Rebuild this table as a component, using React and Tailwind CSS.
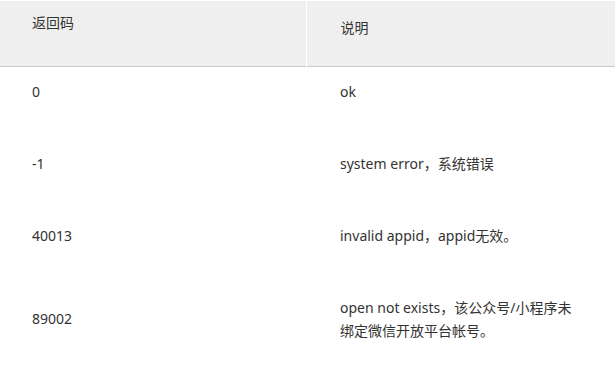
import React from "react";

const rows = [
  { code: "0", desc: "ok" },
  { code: "-1", desc: "system error，系统错误" },
  { code: "40013", desc: "invalid appid，appid无效。" },
  {
    code: "89002",
    desc: (
      <>
        open not exists，该公众号/小程序未
        <br />
        绑定微信开放平台帐号。
      </>
    ),
  },
];

const App = () => {
  return (
    <div
      className="w-[615px] h-[366px] overflow-hidden bg-white pt-px text-[14px] leading-[23px] text-[#333]"
      style={{ fontFamily: '"Noto Sans", "Noto Sans CJK SC", sans-serif' }}
    >
      <table className="w-full border-collapse table-fixed">
        <thead>
          <tr className="bg-[#efefef] border-b border-[#c9c9c9]">
            <th className="w-[306px] h-[65px] align-top text-left font-normal pl-[32px] pt-[10px] border-r border-white">
              返回码
            </th>
            <th className="h-[65px] align-top text-left font-normal pl-[34px] pt-[15px] border-l border-[#d6d6d6]">
              说明
            </th>
          </tr>
        </thead>
        <tbody>
          {rows.map((row) => (
            <tr key={row.code}>
              <td className="align-middle pl-[32px] pt-[13px] pb-[36px]">
                {row.code}
              </td>
              <td className="align-middle pl-[34px] pt-[13px] pb-[36px]">
                {row.desc}
              </td>
            </tr>
          ))}
        </tbody>
      </table>
    </div>
  );
};

export default App;
